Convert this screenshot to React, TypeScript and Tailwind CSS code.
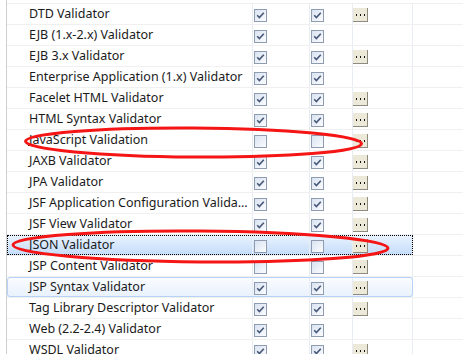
type Row = { name: string; a: boolean; b: boolean; btn: boolean; state?: "selected" | "hover" };

const rows: Row[] = [
  { name: "DTD Validator", a: true, b: true, btn: true },
  { name: "EJB (1.x-2.x) Validator", a: true, b: true, btn: false },
  { name: "EJB 3.x Validator", a: true, b: true, btn: true },
  { name: "Enterprise Application (1.x) Validator", a: true, b: true, btn: false },
  { name: "Facelet HTML Validator", a: true, b: true, btn: true },
  { name: "HTML Syntax Validator", a: true, b: true, btn: true },
  { name: "JavaScript Validation", a: false, b: false, btn: true },
  { name: "JAXB Validator", a: true, b: true, btn: true },
  { name: "JPA Validator", a: true, b: true, btn: true },
  { name: "JSF Application Configuration Validator", a: true, b: true, btn: true },
  { name: "JSF View Validator", a: true, b: true, btn: true },
  { name: "JSON Validator", a: false, b: false, btn: true, state: "selected" },
  { name: "JSP Content Validator", a: false, b: false, btn: true },
  { name: "JSP Syntax Validator", a: true, b: true, btn: true, state: "hover" },
  { name: "Tag Library Descriptor Validator", a: true, b: true, btn: true },
  { name: "Web (2.2-2.4) Validator", a: true, b: true, btn: false },
  { name: "WSDL Validator", a: true, b: true, btn: true },
];

function Check({ on }: { on: boolean }) {
  return (
    <div className="w-[13px] h-[13px] border border-[#8f9bb0] bg-gradient-to-br from-[#d9e3f1] to-[#fbfcfe]">
      {on && (
        <svg width="11" height="11" viewBox="0 0 11 11">
          <path d="M2.2 5.2 L4.4 7.6 L8.8 2.8" fill="none" stroke="#475878" strokeWidth="1.6" />
        </svg>
      )}
    </div>
  );
}

function Dots() {
  return (
    <div className="w-[15px] h-[14px] bg-[#ece9d8] border-r border-b border-[#8d8b80] flex items-center justify-center gap-[3px] pt-[1px]">
      <span className="w-[1px] h-[2px] bg-[#111]" />
      <span className="w-[1px] h-[2px] bg-[#111]" />
      <span className="w-[1px] h-[2px] bg-[#111]" />
    </div>
  );
}

function TableRow({ r }: { r: Row }) {
  const sel = r.state === "selected";
  const hov = r.state === "hover";
  return (
    <div className="flex h-[21px] border-b border-[#f0f0f0]">
      <div
        className={
          "relative flex h-[20px] w-[406px] " +
          (sel ? "bg-gradient-to-b from-[#eaf3fe] to-[#c4dcfa] " : "") +
          (hov ? "bg-gradient-to-b from-[#fbfcfe] to-[#e8f1fd] " : "")
        }
      >
        <div className="w-[246px] border-r border-[#e8ecf3] pl-[22px] pr-[2px] leading-[20px] text-[#1b1b1b] truncate">
          {r.name}
        </div>
        <div className="w-[57px] border-r border-[#e8ecf3] pl-[1px] pt-[5px]">
          <Check on={r.a} />
        </div>
        <div className="w-[43px] border-r border-[#e8ecf3] pl-[1px] pt-[5px]">
          <Check on={r.b} />
        </div>
        <div className="w-[60px] border-r border-[#e8ecf3] pt-[4px]">{r.btn && <Dots />}</div>
        {sel && <div className="absolute inset-0 border border-dotted border-black" />}
        {hov && <div className="absolute inset-0 rounded-[3px] border border-[#b6d3f7]" />}
      </div>
      <div className="flex-1" />
    </div>
  );
}

export default function App() {
  return (
    <div
      className="relative w-[463px] h-[354px] overflow-hidden bg-white text-[12.5px]"
      style={{ fontFamily: '"Noto Sans", "Noto Sans CJK SC", sans-serif' }}
    >
      <div className="flex">
        <div className="w-[7px] h-[354px] border-r border-[#cfcfcf]" />
        <div className="flex-1">
          <div className="h-[4px] border-b border-[#f0f0f0]" />
          {rows.map((r) => (
            <TableRow key={r.name} r={r} />
          ))}
        </div>
      </div>
      <svg className="absolute inset-0 pointer-events-none" width="463" height="354" viewBox="0 0 463 354">
        <ellipse cx="193.5" cy="142.5" rx="168" ry="14.5" transform="rotate(0.4 193.5 142.5)" fill="none" stroke="#f51515" strokeWidth="3" />
        <ellipse cx="200.5" cy="246.5" rx="187.5" ry="15.5" transform="rotate(0.5 200.5 246.5)" fill="none" stroke="#f51515" strokeWidth="3" />
      </svg>
    </div>
  );
}
